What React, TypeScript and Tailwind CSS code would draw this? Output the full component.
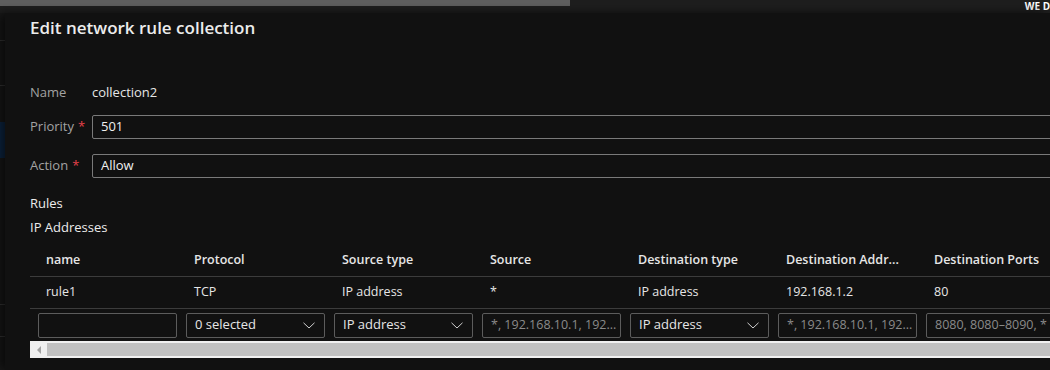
const font = { fontFamily: '"Open Sans", "Noto Sans", sans-serif' };

const columns = [
  { header: "name", value: "rule1", input: { kind: "text", placeholder: "" } },
  { header: "Protocol", value: "TCP", input: { kind: "select", text: "0 selected" } },
  { header: "Source type", value: "IP address", input: { kind: "select", text: "IP address" } },
  { header: "Source", value: "*", input: { kind: "text", placeholder: "*, 192.168.10.1, 192..." } },
  { header: "Destination type", value: "IP address", input: { kind: "select", text: "IP address" } },
  { header: "Destination Addr...", value: "192.168.1.2", input: { kind: "text", placeholder: "*, 192.168.10.1, 192..." } },
  { header: "Destination Ports", value: "80", input: { kind: "text", placeholder: "8080, 8080–8090, *" } }
];

function Required() {
  return <span className="ml-[4px] text-[#e8414b]">*</span>;
}

function Chevron() {
  return (
    <svg width="12" height="7" viewBox="0 0 12 7" fill="none" className="shrink-0">
      <polyline points="0.5,0.8 6,6 11.5,0.8" stroke="#cfcfcf" strokeWidth="1" />
    </svg>
  );
}

function CellInput({ input }: { input: { kind: string; placeholder?: string; text?: string } }) {
  if (input.kind === "select") {
    return (
      <div className="flex h-[25px] w-[139px] shrink-0 items-center justify-between rounded-[2px] border border-[#5c5c5c] pl-[8px] pr-[9px] text-[13px] text-[#e6e6e6]">
        <span>{input.text}</span>
        <Chevron />
      </div>
    );
  }
  return (
    <div className="flex h-[25px] w-[139px] shrink-0 items-center overflow-hidden whitespace-nowrap rounded-[2px] border border-[#5c5c5c] pl-[8px] text-[12.5px] text-[#8a8a8a]">
      {input.placeholder}
    </div>
  );
}

export default function App() {
  return (
    <div className="flex h-[370px] w-[1050px] flex-col overflow-hidden bg-[#111111]" style={font}>
      {/* top strip */}
      <div className="flex h-[13px] shrink-0 items-start bg-[#1e1e1e]">
        <div className="h-[6px] w-[570px] bg-[#5f5f5f]" />
        <div className="flex-1" />
        <span className="mr-[-8px] mt-[1px] whitespace-nowrap text-[10px] font-bold leading-[10px] text-white">WE DO</span>
      </div>

      <div className="flex min-h-0 flex-1">
        {/* collapsed sidebar edge */}
        <div className="flex w-[5px] shrink-0 flex-col bg-[#1a1a1a]">
          <div className="h-[27px] shrink-0" />
          <div className="h-px shrink-0 bg-[#3a3a3a]" />
          <div className="h-[44px] shrink-0" />
          <div className="h-px shrink-0 bg-[#3a3a3a]" />
          <div className="h-[36px] shrink-0" />
          <div className="h-[36px] shrink-0 bg-[#0e2a4a]" />
          <div className="h-[146px] shrink-0" />
          <div className="h-px shrink-0 bg-[#3a3a3a]" />
          <div className="h-[31px] shrink-0" />
          <div className="h-px shrink-0 bg-[#3a3a3a]" />
        </div>

        <div className="flex min-w-0 flex-1 flex-col pl-[25px] pt-[4px] shadow-[-6px_0_10px_rgba(0,0,0,0.6)]">
          <h1 className="text-[17px] font-semibold leading-[22px] text-[#ececec]">Edit network rule collection</h1>

          <div className="mt-[44px] flex h-[20px] items-center text-[13px]">
            <span className="w-[62px] text-[#a3a3a3]">Name</span>
            <span className="text-[#e6e6e6]">collection2</span>
          </div>

          <div className="mt-[12px] flex h-[24px] items-center text-[13px]">
            <span className="w-[62px] shrink-0 text-[#a3a3a3]">
              Priority
              <Required />
            </span>
            <div className="flex h-[24px] w-[1000px] shrink-0 items-center rounded-[2px] border border-[#7a7a7a] pl-[8px] text-[#f0f0f0]">
              501
            </div>
          </div>

          <div className="mt-[15px] flex h-[24px] items-center text-[13px]">
            <span className="w-[62px] shrink-0 text-[#a3a3a3]">
              Action
              <Required />
            </span>
            <div className="flex h-[24px] w-[1000px] shrink-0 items-center rounded-[2px] border border-[#7a7a7a] pl-[8px] text-[#f0f0f0]">
              Allow
            </div>
          </div>

          <div className="mt-[15px] text-[13px] leading-[20px] text-[#ececec]">Rules</div>
          <div className="mt-[4px] text-[13px] leading-[20px] text-[#ececec]">IP Addresses</div>

          {/* rules table */}
          <div className="mt-[8px] w-[1100px]">
            <div className="flex h-[32px] items-center border-b border-[#3c3c3c] px-[8px]">
              {columns.map((c) => (
                <div key={c.header} className="w-[148px] shrink-0 pl-[8px] text-[12.5px] font-semibold text-[#e6e6e6]">
                  {c.header}
                </div>
              ))}
            </div>
            <div className="flex h-[32px] items-center border-b border-[#3c3c3c] px-[8px]">
              {columns.map((c) => (
                <div key={c.header} className="w-[148px] shrink-0 pl-[8px] text-[12.5px] text-[#e6e6e6]">
                  {c.value}
                </div>
              ))}
            </div>
            <div className="flex h-[32px] items-center px-[8px]">
              {columns.map((c) => (
                <div key={c.header} className="w-[148px] shrink-0">
                  <CellInput input={c.input} />
                </div>
              ))}
            </div>
            <div className="flex h-[17px] items-center bg-[#f0f0f0]">
              <div className="flex w-[17px] shrink-0 justify-center">
                <div className="h-0 w-0 border-y-[4px] border-r-[4px] border-y-transparent border-r-[#a3a3a3]" />
              </div>
              <div className="h-[13px] flex-1 bg-[#c1c1c1]" />
            </div>
          </div>
        </div>
      </div>
    </div>
  );
}
